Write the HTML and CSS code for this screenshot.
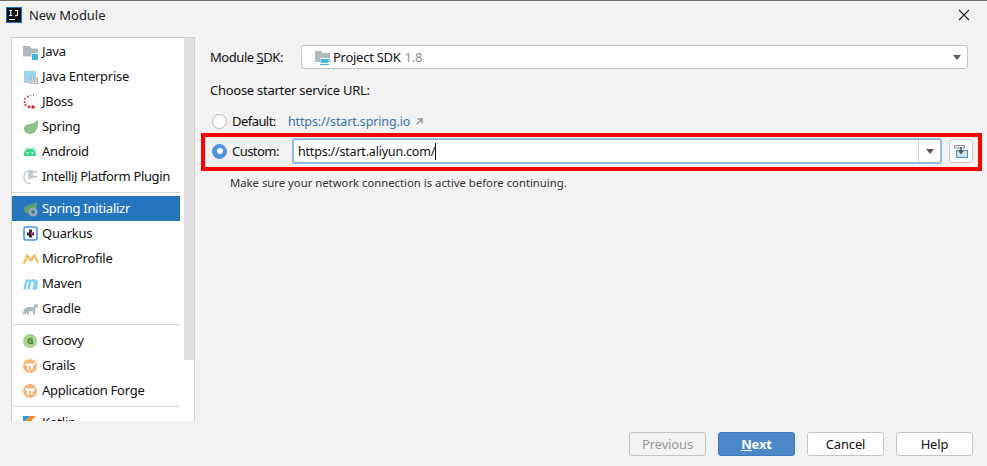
FILE: index.html
```html
<!DOCTYPE html>
<html lang="en">
<head>
<meta charset="utf-8">
<title>New Module</title>
<link rel="stylesheet" href="styles.css">
</head>
<body>
<div class="dialog">
  <header class="titlebar">
    <svg class="app-icon" width="16" height="16" viewBox="0 0 16 16"><rect x="0.5" y="0.5" width="15" height="15" fill="#111" stroke="#1c6fd6"/><rect x="3" y="12" width="6" height="1" fill="#fff"/><path d="M3.200 3.500h3M4.700 3.500v5M3.200 8.500h3M9 3.500h3.500M11.500 3.500v4.200q0 1-1 1H9" fill="none" stroke="#fff" stroke-width="1.100"/></svg>
    <span class="title">New Module</span>
    <svg class="close" width="12" height="12" viewBox="0 0 12 12"><path d="M1 1l10 10M11 1L1 11" stroke="#222" stroke-width="1.100"/></svg>
  </header>
  <div class="body">
    <nav class="sidebar">
      <div class="list">
        <div class="item"><svg class="ic" viewBox="0 0 16 16"><path d="M0 2h6.500L9 4.500h6V9H8.500v3.500H0z" fill="#aeb9c0"/><rect x="9" y="10" width="6" height="6" fill="#40b6e0"/></svg>Java</div>
        <div class="item"><svg class="ic" viewBox="0 0 16 16"><path d="M1 2h12v6H7v6H1z" fill="#9cd6ee"/><rect x="7" y="8" width="8" height="7" fill="#aeb9c0"/><path d="M8.500 10h2M8.500 11.800h2M8.500 13.500h2M12 10h2M12 11.800h2M12 13.500h2" stroke="#fff" stroke-width="0.800"/></svg>Java Enterprise</div>
        <div class="item"><svg class="ic" viewBox="0 0 16 16"><g fill="#cc1f2d"><circle cx="7.500" cy="1.500" r="0.600"/><circle cx="10.500" cy="1.200" r="0.600"/><circle cx="4.800" cy="2.800" r="0.900"/><circle cx="2" cy="5" r="0.900"/><circle cx="1.500" cy="8" r="1"/><circle cx="2.500" cy="11" r="1.100"/><circle cx="6" cy="12.800" r="1.400"/><circle cx="10" cy="13" r="1.700"/></g></svg>JBoss</div>
        <div class="item"><svg class="ic" viewBox="0 0 16 16"><path d="M15 .5C15.800 8 13 15 7 15c-3.500 0-6-2.300-6-5.500C1 5 7 5.500 10.500 4 12.500 3.200 14 2 15 .5z" fill="#8bc28a"/></svg>Spring</div>
        <div class="item"><svg class="ic" viewBox="0 0 16 16"><path d="M1 12V10C1 6.500 4 4.500 7 4.500S13 6.500 13 10v2z" fill="#3ddc84"/><path d="M3 3l1.500 2.500M11 3L9.500 5.500" stroke="#3ddc84" stroke-width="1"/><circle cx="4.500" cy="9" r="1" fill="#fff"/><circle cx="9.500" cy="9" r="1" fill="#fff"/></svg>Android</div>
        <div class="item"><svg class="ic" viewBox="0 0 16 16"><path d="M5 2C2 2.500 1 4.500 1 8s1.500 6.500 5.500 6.500H8" fill="none" stroke="#c3ccd2" stroke-width="1.500"/><rect x="5" y="1" width="5" height="9" rx="1" fill="#c3ccd2"/><path d="M10 3h4M10 7.500h4" stroke="#aeb9c0" stroke-width="1.600"/></svg><span class="tight">IntelliJ Platform Plugin</span></div>
        <div class="sep"></div>
        <div class="item active"><svg class="ic" viewBox="0 0 16 16"><path d="M14 .5C14.500 6 12 13 7 13c-3.500 0-6-2-6-5C1 4 6 4 9.500 3 11.500 2.500 13 1.500 14 .5z" fill="#5f9e6e"/><circle cx="10" cy="11" r="4.500" fill="#9aa7b0"/><circle cx="10" cy="11" r="1.800" fill="#2675bf"/></svg>Spring Initializr</div>
        <div class="item"><svg class="ic" viewBox="0 0 16 16"><rect x="1" y="1" width="13" height="13" rx="2" fill="#fff" stroke="#4695eb" stroke-width="1.600"/><path d="M6 3.500h3v3h2v3H9v2H6v-2H4v-3h2z" fill="#2b2b3a"/><path d="M7.500 5.500l3.500 2-3.500 2z" fill="#e0245e"/></svg>Quarkus</div>
        <div class="item"><svg class="ic" viewBox="0 0 16 16"><path d="M1 12l3.500-7.500L8 9.500l3.500-5L15 12" fill="none" stroke="#f7b45a" stroke-width="2.200" stroke-linecap="round" stroke-linejoin="round" stroke-dasharray="3.500 1.300"/></svg>MicroProfile</div>
        <div class="item"><svg class="ic" viewBox="0 0 16 16"><path d="M1.500 13.500L3.300 5q3-1.500 3.800.5L5.500 13.500M7.100 5.500q3-2 4.300-.2.800.8.500 2L10.500 13.500" fill="none" stroke="#7ccfef" stroke-width="2.300"/><path d="M11.400 5q2.500-1 2.600 1.500L12.800 13.500" fill="none" stroke="#7ccfef" stroke-width="2.300"/></svg>Maven</div>
        <div class="item"><svg class="ic" viewBox="0 0 16 16"><path d="M0 13.500C0 8 2.500 6 6 6c2.500 0 3.500.5 4.500 0 .5-2.500 2.500-3.500 4-2.500 1.500 1 .5 3.500-2 3.500-.5 2.500-.5 4.500-.5 6.500H10v-3H6v3H4v-2.500l-1.500 2.500z" fill="#aeb9c0"/></svg>Gradle</div>
        <div class="sep"></div>
        <div class="item"><svg class="ic" viewBox="0 0 16 16"><circle cx="7" cy="8" r="7" fill="#a5d38f"/><text x="7" y="11" class="g">G</text></svg>Groovy</div>
        <div class="item"><svg class="ic" viewBox="0 0 16 16"><circle cx="7" cy="8" r="7" fill="#f9b47a"/><path d="M2 5.500h10L10.500 8H10l-.5 4H8V8H6v4H4.500L4 8h-.5z" fill="#fff"/></svg>Grails</div>
        <div class="item"><svg class="ic" viewBox="0 0 16 16"><circle cx="7" cy="8" r="7" fill="#f9b47a"/><path d="M2 5.500h10L10.500 8H10l-.5 4H8V8H6v4H4.500L4 8h-.5z" fill="#fff"/></svg>Application Forge</div>
        <div class="sep"></div>
        <div class="item"><svg class="ic" viewBox="0 0 16 16"><path d="M0 1h7L0 8z" fill="#1e9bf0"/><path d="M7 1h6L0 14V8z" fill="#f88a1c"/></svg>Kotlin</div>
        <div class="scrollbar"></div>
      </div>
    </nav>
    <main class="content">
      <div class="sdk-row">
        <label class="field-label">Module <u>S</u>DK:</label>
        <div class="combo">
          <svg class="sdk-icon" width="16" height="16" viewBox="0 0 16 16"><path d="M0 2h6l2 2h7v5H5v4H0z" fill="#aeb9c0"/><path d="M5.500 10H13v2.500q0 1.500-1.500 1.500h-4q-2 0-2-1.500z" fill="#40b6e0"/><path d="M13 10.500h2v2h-2" fill="none" stroke="#40b6e0"/><rect x="5" y="15" width="9" height="1" fill="#40b6e0"/></svg>
          <span>Project SDK</span><span class="version">1.8</span>
          <span class="arrow combo-arrow"></span>
        </div>
      </div>
      <p class="choose">Choose starter service URL:</p>
      <div class="radio-row">
        <span class="radio"></span>
        <span class="radio-label">Default:</span>
        <span class="link">https://start.spring.io</span>
        <svg class="ext" width="7" height="7" viewBox="0 0 7 7"><path d="M.7 6.300L5.500 1.500M1.500 1h4.500v4.500" fill="none" stroke="#8c9aa5" stroke-width="1.500"/></svg>
      </div>
      <div class="radio-row custom-row">
        <span class="radio on"></span>
        <span class="radio-label">Custom:</span>
        <div class="url-combo">
          <span class="url-text">https://start.aliyun.com/</span><span class="caret"></span>
          <span class="url-btn"><span class="arrow"></span></span>
        </div>
        <span class="side-btn">
          <svg width="16" height="16" viewBox="0 0 16 16"><path d="M1.500 5V2.500h10V5z" fill="#fff" stroke="#8a8f94" stroke-width="1"/><rect x="3.500" y="7.500" width="11" height="7" fill="#cfe3ee" stroke="#4f94b8" stroke-width="1"/><path d="M8 4v4" stroke="#555" stroke-width="1.500"/><path d="M5 7.500h6L8 11.500z" fill="#555"/></svg>
        </span>
        <div class="highlight"></div>
      </div>
      <p class="hint">Make sure your network connection is active before continuing.</p>
    </main>
  </div>
  <footer class="footer">
    <button class="btn disabled">Previous</button>
    <button class="btn primary"><u>N</u>ext</button>
    <button class="btn cancel">Cancel</button>
    <button class="btn">Help</button>
  </footer>
</div>
</body>
</html>
```
FILE: styles.css
```css
* { box-sizing: border-box; }
html, body { margin: 0; height: 100%; }
body {
  background: #f2f2f2;
  font-family: "Noto Sans", sans-serif;
  font-size: 13px;
  letter-spacing: -0.27px;
  color: #111;
  overflow: hidden;
}
.dialog {
  height: 466px;
  display: flex;
  flex-direction: column;
  border-top: 1px solid #707070;
}
.titlebar {
  height: 29px;
  flex: none;
  display: flex;
  align-items: center;
  padding: 0 17px 2px 6px;
}
.app-icon { margin-right: 7px; }
.title { flex: 1; letter-spacing: -0.05px; color: #222; }
.body {
  height: 391px;
  flex: none;
  display: flex;
  padding: 7px 0 0 11px;
}
.sidebar {
  width: 184px;
  height: 384px;
  flex: none;
  overflow: hidden;
  background: #fff;
  border: solid #d0d0d0;
  border-width: 1px 1px 0 1px;
}
.list { position: relative; padding-right: 14px; padding-top: 1px; }
.item {
  height: 25px;
  display: flex;
  align-items: center;
  padding-left: 11px;
  gap: 3px;
  line-height: 25px;
  white-space: nowrap;
}
.tight { letter-spacing: -0.36px; }
.ic { width: 16px; height: 16px; flex: none; }
.item.active { background: #2675bf; color: #fff; }
.sep { height: 4px; margin-top: 3px; border-top: 1px solid #d6d6d6; }
.scrollbar {
  position: absolute;
  top: 0;
  right: 0;
  width: 10px;
  height: 322px;
  background: #e0e0e0;
}
.g { font-size: 9px; font-weight: 700; fill: #4b7a3c; text-anchor: middle; font-family: "Noto Sans", sans-serif; }
.content { flex: 1; padding: 8px 14px 0 15px; min-width: 0; }
.sdk-row { display: flex; align-items: center; height: 24px; margin-right: 5px; }
.field-label { width: 91px; flex: none; letter-spacing: -0.45px; }
.combo {
  flex: 1;
  height: 24px;
  background: #fff;
  border: 1px solid #c4c4c4;
  border-radius: 3px;
  display: flex;
  align-items: center;
  padding-left: 13px;
  letter-spacing: -0.27px;
}
.sdk-icon { margin-right: 2px; }
.version { color: #8c8c8c; margin-left: 4px; }
.arrow {
  width: 0;
  height: 0;
  border: solid transparent;
  border-width: 5px 4.500px 0;
  border-top-color: #5c5c5c;
  display: block;
}
.combo-arrow { margin-left: auto; margin-right: 6px; }
.choose { margin: 12px 0 0; height: 18px; line-height: 18px; }
.radio-row { display: flex; align-items: center; height: 26px; margin: 9px 0 0 2px; }
.radio-row.custom-row { position: relative; margin-top: 4px; }
.radio {
  width: 15px;
  height: 15px;
  border-radius: 50%;
  border: 1px solid #b8b8b8;
  background: #fff;
  flex: none;
  margin-right: 5px;
}
.radio.on {
  background: #4c94de;
  border-color: #4c94de;
  position: relative;
}
.radio.on::after {
  content: "";
  position: absolute;
  left: 3.500px;
  top: 3.500px;
  width: 6px;
  height: 6px;
  border-radius: 50%;
  background: #fff;
}
.radio-label { width: 56px; flex: none; letter-spacing: -0.55px; }
.link { color: #3a75a8; font-size: 12.500px; letter-spacing: -0.13px; }
.ext { margin-left: 6px; }
.url-combo {
  width: 650px;
  height: 26px;
  flex: none;
  background: #fff;
  border: 2px solid #8fbce9;
  border-radius: 3px;
  display: flex;
  align-items: center;
  padding-left: 4px;
  margin-left: 4px;
}
.url-text { white-space: nowrap; font-size: 12.500px; letter-spacing: -0.2px; }
.caret { width: 1px; height: 17px; background: #111; }
.url-btn {
  margin-left: auto;
  width: 22px;
  height: 100%;
  border-left: 1px solid #d0d0d0;
  display: flex;
  align-items: center;
  justify-content: center;
}
.side-btn {
  width: 24px;
  height: 24px;
  flex: none;
  margin-left: 7px;
  background: #fff;
  border: 1px solid #c8c8c8;
  border-radius: 3px;
  display: flex;
  align-items: center;
  justify-content: center;
}
.highlight {
  position: absolute;
  left: -11px;
  right: -9px;
  top: -5px;
  bottom: -7px;
  border: 4px solid #f00;
  pointer-events: none;
}
.hint { margin: 11px 0 0 20px; font-size: 11.300px; letter-spacing: 0; line-height: 16px; color: #333; }
.footer {
  flex: 1;
  display: flex;
  justify-content: flex-end;
  align-items: flex-start;
  gap: 12px;
  padding: 11px 14px 0 0;
}
.btn {
  width: 77px;
  height: 24px;
  background: #fff;
  border: 1px solid #c4c4c4;
  border-radius: 3px;
  font: 13px "Noto Sans", sans-serif;
  letter-spacing: -0.15px;
  color: #111;
  padding: 0;
}
.btn.disabled { background: #f2f2f2; color: #999; }
.btn.primary { background: #4a88c7; border-color: #3f7ab8; color: #fff; font-weight: 700; }
```
